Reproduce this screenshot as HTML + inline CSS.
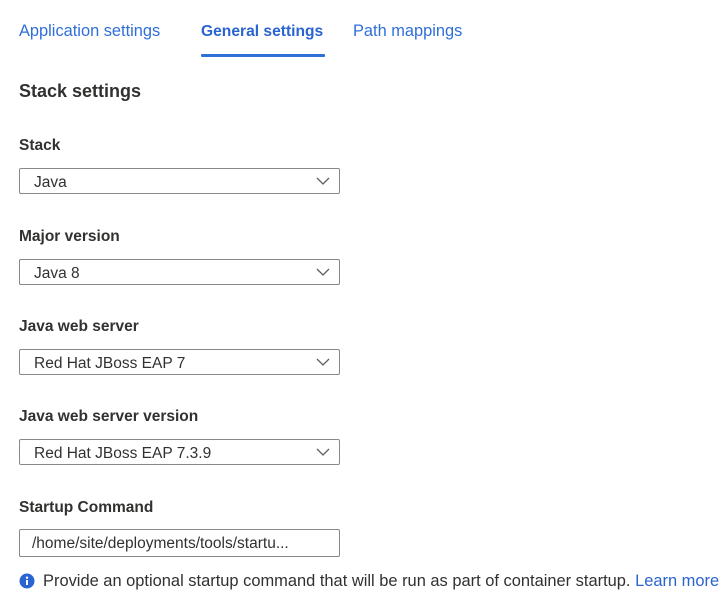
<!DOCTYPE html>
<html><head><style>
body{margin:0;width:727px;height:600px;background:#fff;font-family:"Liberation Sans",sans-serif;position:relative;overflow:hidden;color:#323130}
.a{position:absolute;white-space:nowrap}
.tab{color:#2f6fd8;font-size:16.4px;top:22px}
.lbl{font-size:15.5px;font-weight:bold;left:19px;color:#323130}
.box{position:absolute;left:19px;width:321px;border:1px solid #8a8886;border-radius:2px;font-size:15.5px;box-sizing:border-box;padding-left:14px;line-height:27px;height:26px}
.box svg{position:absolute;right:9px;top:8px}
</style></head><body>
<div class="a tab" style="left:19px">Application settings</div>
<div class="a tab" style="left:201px;font-weight:bold;color:#2a64d1;font-size:15.6px;top:23px">General settings</div>
<div class="a tab" style="left:353px">Path mappings</div>
<div class="a" style="left:201px;top:54px;width:124px;height:3px;background:#2f6fd8;border-radius:1px"></div>
<div class="a" style="left:19px;top:81px;font-size:18px;font-weight:bold">Stack settings</div>

<div class="a lbl" style="top:137px">Stack</div>
<div class="box" style="top:168px">Java<svg width="14" height="8"><path d="M1 1L7 7L13 1" fill="none" stroke="#605e5c" stroke-width="1.3"/></svg></div>
<div class="a lbl" style="top:228px">Major version</div>
<div class="box" style="top:259px">Java 8<svg width="14" height="8"><path d="M1 1L7 7L13 1" fill="none" stroke="#605e5c" stroke-width="1.3"/></svg></div>
<div class="a lbl" style="top:318px">Java web server</div>
<div class="box" style="top:349px">Red Hat JBoss EAP 7<svg width="14" height="8"><path d="M1 1L7 7L13 1" fill="none" stroke="#605e5c" stroke-width="1.3"/></svg></div>
<div class="a lbl" style="top:408px">Java web server version</div>
<div class="box" style="top:439px">Red Hat JBoss EAP 7.3.9<svg width="14" height="8"><path d="M1 1L7 7L13 1" fill="none" stroke="#605e5c" stroke-width="1.3"/></svg></div>
<div class="a lbl" style="top:499px">Startup Command</div>
<div class="box" style="top:529px;height:28px;line-height:28px;padding-left:12px">/home/site/deployments/tools/startu...</div>

<svg class="a" style="left:19px;top:573px" width="16" height="16"><circle cx="8" cy="8" r="7.5" fill="#2a64d1"/><rect x="7" y="7" width="2" height="5" fill="#fff"/><circle cx="8" cy="4.7" r="1.2" fill="#fff"/></svg>
<div class="a" style="left:43px;top:572px;font-size:16.45px">Provide an optional startup command that will be run as part of container startup. <span style="color:#2a64d1">Learn more</span></div>
</body></html>
